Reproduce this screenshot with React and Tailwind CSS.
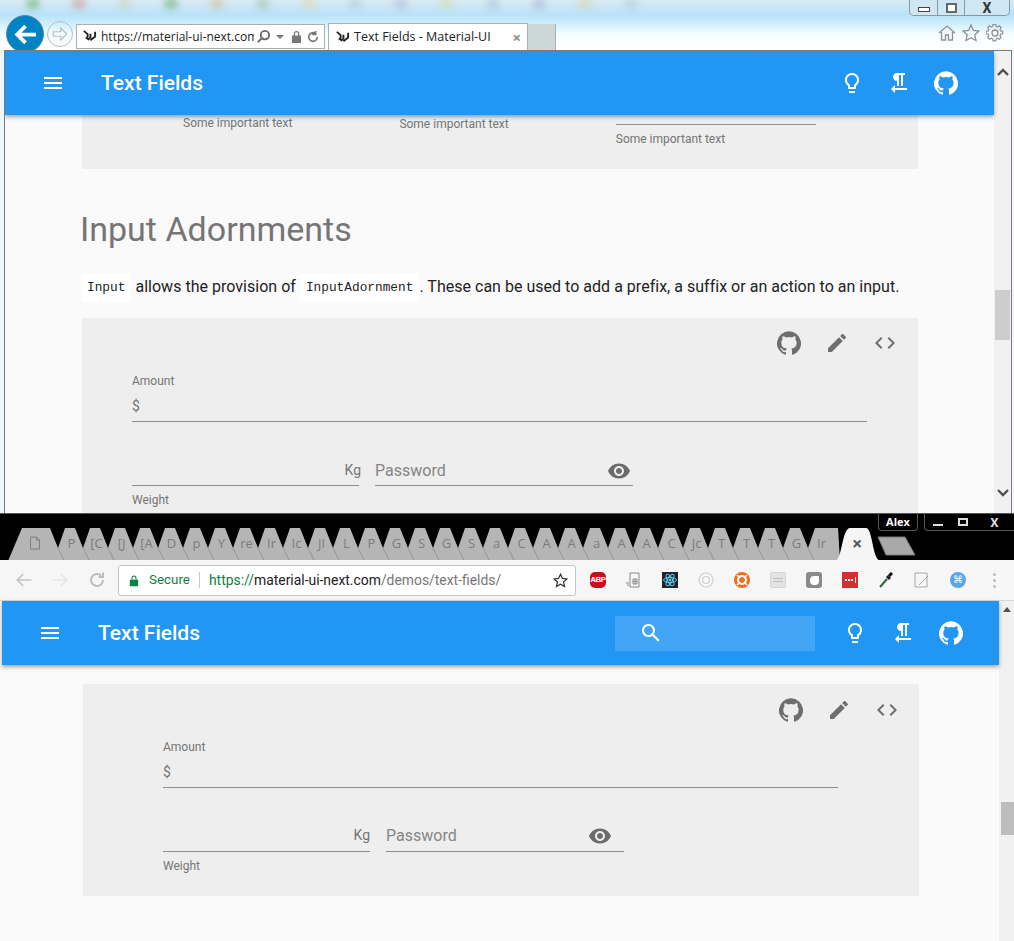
import React from 'react';

const paths = {
    menu: 'M3 18h18v-2H3v2zm0-5h18v-2H3v2zm0-7v2h18V6H3z',
    bulb: 'M9 21c0 .55.45 1 1 1h4c.55 0 1-.45 1-1v-1H9v1zm3-19C8.14 2 5 5.14 5 9c0 2.38 1.19 4.47 3 5.74V17c0 .55.45 1 1 1h6c.55 0 1-.45 1-1v-2.26c1.81-1.27 3-3.36 3-5.74 0-3.86-3.14-7-7-7zm2.85 11.1l-.85.6V16h-4v-2.3l-.85-.6C7.8 12.16 7 10.63 7 9c0-2.76 2.24-5 5-5s5 2.24 5 5c0 1.63-.8 3.16-2.15 4.1z',
    rtl: 'M10 10v5h2V4h2v11h2V4h2V2h-8C7.79 2 6 3.79 6 6s1.79 4 4 4zm-2 7v-3l-4 4 4 4v-3h12v-2H8z',
    github: 'M12 .3a12 12 0 0 0-3.8 23.4c.6.1.8-.3.8-.6v-2c-3.3.7-4-1.6-4-1.6-.6-1.4-1.4-1.8-1.4-1.8-1-.7.1-.7.1-.7 1.2 0 1.9 1.2 1.9 1.2 1 1.8 2.8 1.3 3.5 1 0-.8.4-1.3.7-1.6-2.7-.3-5.5-1.3-5.5-6 0-1.2.5-2.3 1.3-3.1-.2-.4-.6-1.6 0-3.2 0 0 1-.3 3.4 1.2a11.5 11.5 0 0 1 6 0c2.3-1.5 3.3-1.2 3.3-1.2.6 1.6.2 2.8 0 3.2.9.8 1.3 1.9 1.3 3.2 0 4.6-2.8 5.6-5.5 5.9.5.4.9 1 .9 2.2v3.3c0 .3.1.7.8.6A12 12 0 0 0 12 .3',
    pencil: 'M3 17.25V21h3.75L17.81 9.94l-3.75-3.75L3 17.25zM20.71 7.04c.39-.39.39-1.02 0-1.41l-2.34-2.34c-.39-.39-1.02-.39-1.41 0l-1.83 1.83 3.75 3.75 1.83-1.83z',
    code: 'M9.4 16.6L4.8 12l4.6-4.6L8 6l-6 6 6 6 1.4-1.4zm5.2 0l4.6-4.6-4.6-4.6L16 6l6 6-6 6-1.4-1.4z',
    eye: 'M12 4.5C7 4.5 2.73 7.61 1 12c1.73 4.39 6 7.5 11 7.5s9.27-3.11 11-7.5c-1.73-4.39-6-7.5-11-7.5zM12 17c-2.76 0-5-2.24-5-5s2.24-5 5-5 5 2.24 5 5-2.24 5-5 5zm0-8c-1.66 0-3 1.34-3 3s1.34 3 3 3 3-1.34 3-3-1.34-3-3-3z',
    search: 'M15.5 14h-.79l-.28-.27C15.41 12.59 16 11.11 16 9.5 16 5.91 13.09 3 9.5 3S3 5.91 3 9.5 5.91 16 9.5 16c1.61 0 3.09-.59 4.23-1.57l.27.28v.79l5 4.99L20.49 19l-4.99-5zm-6 0C7.01 14 5 11.99 5 9.5S7.01 5 9.5 5 14 7.01 14 9.5 11.99 14 9.5 14z',
};

const Icon = ({ name, className }) => (
    <svg viewBox="0 0 24 24" fill="currentColor" className={className}>
        <path d={paths[name]} />
    </svg>
);

const MuiLogo = () => (
    <svg viewBox="0 0 16 16" className="w-[15px] h-[15px] shrink-0" fill="none" stroke="#222" strokeWidth="2">
        <path d="M2 2l4 3.500V9M9 5v4l-2 2-3-2M14 3v5l-5 4" />
    </svg>
);

const AppBar = ({ left, title, titleClass, children, gap }) => (
    <header className="h-16 bg-[#2196f3] text-white flex items-center shadow-[0_2px_4px_rgba(0,0,0,0.35)] shrink-0 relative z-10">
        <Icon name="menu" className={`w-6 h-6 shrink-0 ${left}`} />
        <h1 className={`text-[21px] font-medium leading-none ${titleClass}`}>{title}</h1>
        <div className={`ml-auto flex items-center ${gap}`}>{children}</div>
    </header>
);

const DemoIcons = ({ className }) => (
    <div className={`flex items-center justify-end text-[#6e6e6e] ${className}`}>
        <Icon name="github" className="w-6 h-6" />
        <Icon name="pencil" className="w-6 h-6 ml-6" />
        <Icon name="code" className="w-6 h-6 ml-6" />
    </div>
);

// the amount / weight / password form, both windows show the same one
const AdornmentForm = ({ kgWidth, passwordWidth, kgClass, kgPad, rowPad, eyeClass }) => (
    <div>
        <p className="text-xs leading-none text-[#757575]">Amount</p>
        <div className="border-b border-[#8c8c8c] h-[35px] pt-[11px] text-[14px] leading-4 text-[#757575]">$</div>
        <div className="flex mt-[32px] gap-[16px]">
            <div className={kgWidth}>
                <div className={`border-b border-[#8c8c8c] h-[32px] text-[14px] leading-4 text-[#757575] text-right ${kgPad}`}>
                    <span className={kgClass}>Kg</span>
                </div>
                <p className="text-xs leading-none text-[#757575] mt-[8px]">Weight</p>
            </div>
            <div className={`${passwordWidth} border-b border-[#8c8c8c] h-[32px] flex items-center justify-between text-[16px] text-[#858585] ${rowPad}`}>
                <span>Password</span>
                <Icon name="eye" className={`w-6 h-6 text-[#6b6b6b] ${eyeClass}`} />
            </div>
        </div>
    </div>
);

const IeBar = () => (
    <div className="h-[50px] shrink-0 relative bg-[linear-gradient(180deg,#dcebf2_0px,#b9e2f8_14px,#c4e9fb_20px,#f4fdff_34px,#ffffff_50px)] overflow-hidden">
        {/* faint desktop icons behind the glass */}
        <div className="absolute left-[26px] -top-[2px] flex gap-[32px] blur-[3px]">
            {['#58a858', '#d88888', '#c8d0b8', '#58a858', '#d8b888', '#90c0a0', '#e0d8a8', '#b0c8d8', '#a8b8d8', '#d8d8a8', '#a8c0d8', '#a0b0d8', '#d8d0a0', '#b0c8d8'].map((c, i) => (
                <div key={i} className="w-[14px] h-[11px] rounded-full opacity-50" style={{ background: c }} />
            ))}
        </div>
        <div className="absolute left-[6px] top-[15px] w-[38px] h-[38px] rounded-full bg-[#0083c4] border border-[#5a8aa5] flex items-center justify-center">
            <svg viewBox="0 0 24 24" className="w-[25px] h-[25px]" fill="none" stroke="#fff" strokeWidth="3.6">
                <path d="M12 4l-8 8 8 8M4 12h18" />
            </svg>
        </div>
        <div className="absolute left-[47px] top-[21px] w-[26px] h-[26px] rounded-full border border-[#b5bcc0] flex items-center justify-center">
            <svg viewBox="0 0 24 24" className="w-[18px] h-[18px]" fill="none" stroke="#b8bec2" strokeWidth="1.6">
                <path d="M13 4l8 8-8 8v-5H3V9h10z" />
            </svg>
        </div>
        <div className="absolute left-[76px] top-[24px] w-[249px] h-[25px] bg-white border border-[#a8b0b0] flex items-center pl-[5px] text-[#222] font-['Open_Sans',sans-serif]">
            <MuiLogo />
            <span className="ml-[4px] w-[153px] overflow-hidden whitespace-nowrap text-[12px]">https://material-ui-next.com/</span>
            <svg viewBox="0 0 16 16" className="w-[15px] h-[15px] ml-[2px]" fill="none" stroke="#666" strokeWidth="2">
                <circle cx="9.5" cy="6.5" r="4.5" />
                <path d="M6 10l-4 4" />
            </svg>
            <div className="w-0 h-0 ml-[5px] border-x-[4px] border-x-transparent border-t-[4px] border-t-[#777]" />
            <svg viewBox="0 0 12 14" className="w-[11px] h-[13px] ml-[7px]" fill="#777">
                <path d="M1 6h10v8H1zM3 6V4a3 3 0 0 1 6 0v2H7.6V4a1.6 1.6 0 0 0-3.2 0v2z" />
            </svg>
            <svg viewBox="0 0 14 14" className="w-[12px] h-[12px] ml-[5px]" fill="none" stroke="#777" strokeWidth="2">
                <path d="M12 7a5 5 0 1 1-2-4M10 0v4H6" />
            </svg>
        </div>
        <div className="absolute left-[328px] top-[23px] w-[200px] h-[27px] bg-white border border-b-0 border-[#a8b0b0] flex items-center pl-[6px] text-[12.5px] text-[#222] font-['Open_Sans',sans-serif]">
            <MuiLogo />
            <span className="ml-[4px]">Text Fields - Material-UI</span>
            <span className="ml-auto mr-[6px] text-[#8a8a8a] text-[15px] font-bold leading-none">×</span>
        </div>
        <div className="absolute left-[528px] top-[24px] w-[28px] h-[26px] bg-[#ccd8d8] border-r border-[#a8b0b0]" />
        <div className="absolute left-[909px] top-0 w-[101px] h-[16px] border border-t-0 border-[#8a9aa5] rounded-b-[5px] flex bg-[#cfe7f2] text-[#333]">
            <div className="w-[28px] border-r border-[#8a9aa5] flex items-center justify-center">
                <div className="w-[12px] h-[5px] border border-[#444] bg-white mt-1" />
            </div>
            <div className="w-[27px] border-r border-[#8a9aa5] flex items-center justify-center">
                <div className="w-[11px] h-[10px] border-2 border-[#666] bg-white" />
            </div>
            <div className="flex-1 flex items-center justify-center text-[14px] leading-none font-bold">X</div>
        </div>
        <div className="absolute right-[10px] top-[24px] flex items-center gap-[6px] text-[#8f8f8f]">
            <svg viewBox="0 0 18 18" className="w-[18px] h-[18px]" fill="none" stroke="currentColor" strokeWidth="1.3">
                <path d="M1 9l8-7 8 7M3.5 8v8h4v-5h3v5h4V8" />
            </svg>
            <svg viewBox="0 0 18 18" className="w-[18px] h-[18px]" fill="none" stroke="currentColor" strokeWidth="1.3">
                <path d="M9 1l2.4 5.4 5.6.6-4.2 3.8 1.2 5.7L9 13.7l-5 2.8 1.2-5.7L1 7l5.6-.6z" />
            </svg>
            <svg viewBox="0 0 18 18" className="w-[18px] h-[18px]" fill="none" stroke="currentColor" strokeWidth="1.3">
                <circle cx="9" cy="9" r="3" />
                <path d="M7.500 1h3l.4 2.300 1.600.7 2-1.300 2 2-1.300 2 .7 1.600 2.300.4v3l-2.300.4-.7 1.600 1.300 2-2 2-2-1.300-1.600.7-.4 2.300h-3l-.4-2.300-1.600-.7-2 1.300-2-2 1.300-2-.7-1.600-2.300-.4v-3l2.300-.4.7-1.600-1.300-2 2-2 2 1.300 1.600-.7z" transform="translate(.3 -.6) scale(.9)" />
            </svg>
        </div>
    </div>
);

const IeScrollbar = () => (
    <div className="w-[17px] bg-[#f1f1f1] flex flex-col items-center justify-between shrink-0 relative">
        <svg viewBox="0 0 12 8" className="w-3 h-2 mt-[17px]" fill="none" stroke="#505050" strokeWidth="2.4">
            <path d="M1 7l5-5 5 5" />
        </svg>
        <div className="absolute left-[1px] top-[239px] w-[15px] h-[50px] bg-[#cdcdcd]" />
        <svg viewBox="0 0 12 8" className="w-3 h-2 mb-[16px]" fill="none" stroke="#505050" strokeWidth="2.4">
            <path d="M1 1l5 5 5-5" />
        </svg>
    </div>
);

const IeWindow = () => (
    <div className="h-[513px] shrink-0 flex flex-col bg-[#eef8fc]">
        <IeBar />
        <div className="flex-1 min-h-0 ml-[4px] mr-[2px] border-l border-r border-t border-[#7a7a7a] flex overflow-hidden">
            <div className="flex-1 min-w-0 flex flex-col bg-[#fafafa]">
                <AppBar left="ml-[36px]" title="Text Fields" titleClass="ml-[36px]" gap="gap-[23px] mr-[36px]">
                    <Icon name="bulb" className="w-6 h-6" />
                    <Icon name="rtl" className="w-6 h-6" />
                    <Icon name="github" className="w-6 h-6" />
                </AppBar>
                <div className="ml-[77px] mr-[76px] h-[54px] bg-[#eeeeee] flex text-xs text-[#757575] shrink-0">
                    <p className="ml-[101px] mt-[1px] leading-[14px]">Some important text</p>
                    <p className="ml-[107px] mt-[2px] leading-[14px]">Some important text</p>
                    <div className="ml-[107px] w-[200px]">
                        <div className="h-[10px] border-b border-[#8c8c8c]" />
                        <p className="mt-[7px] leading-[14px]">Some important text</p>
                    </div>
                </div>
                <div className="ml-[76px] mr-[76px] shrink-0">
                    <h2 className="mt-[40px] -ml-px text-[34px] leading-[40px] text-[#757575]">Input Adornments</h2>
                    <p className="mt-[23px] text-[16px] leading-[30px] text-[#222] whitespace-nowrap flex items-center tracking-[0.02px]">
                        <code className="bg-white px-[6px] h-[29px] leading-[29px] tracking-normal text-[12.8px] font-['Liberation_Mono',monospace] text-[#222]">Input</code>
                        <span className="ml-[4px]">allows the provision of</span>
                        <code className="bg-white px-[6px] ml-[4px] h-[29px] leading-[29px] tracking-normal text-[12.8px] font-['Liberation_Mono',monospace] text-[#222]">InputAdornment</code>
                        <span>. These can be used to add a prefix, a suffix or an action to an input.</span>
                    </p>
                </div>
                <div className="ml-[77px] mr-[76px] mt-[16px] bg-[#eeeeee] flex-1 min-h-0 overflow-hidden">
                    <DemoIcons className="pt-[13px] pr-[21px]" />
                    <div className="ml-[50px] mr-[51px] mt-[20px]">
                        <AdornmentForm kgWidth="w-[227px]" passwordWidth="w-[258px]" kgPad="pt-[8px]" kgClass="relative left-[2px]" rowPad="pt-[2px]" eyeClass="mr-[2px]" />
                    </div>
                </div>
            </div>
            <IeScrollbar />
        </div>
    </div>
);

const tabLabels = ['P', '[C', '[J', '[A', 'D', 'p', 'Y', 're', 'Ir', 'Ic', 'JI', 'L', 'P', 'G', 'S', 'G', 'S', 'a', 'C', 'A', 'A', 'a', 'A', 'A', 'C', 'Jc', 'T', 'T', 'T', 'G', 'Ir'];

const TabShapes = () => {
    const notches = [];
    for (let i = 0; i < 31; i++) {
        const x = 58 + i * 25;
        notches.push(
            <g key={i}>
                <path d={`M${x - 8} 14H${x + 7}L${x} 34z`} fill="#000" />
                <path d={`M${x} 34L${x + 6} 46`} stroke="#959595" strokeWidth="1" />
            </g>
        );
    }
    return (
        <svg viewBox="0 0 1014 47" className="absolute left-0 top-0 w-[1014px] h-[47px]">
            <path d="M8 47L22 14H838L840 47z" fill="#b5b5b5" />
            {notches}
            <path d="M835 47C842 47 842 14 850 14H866C873 14 872 47 881 47z" fill="#f5f5f5" />
            <path d="M878 23H905L915 41H886z" fill="#a9a9a9" stroke="#777" strokeWidth="1" />
        </svg>
    );
};

const ExtIcon = ({ children }) => <div className="w-4 h-4 flex items-center justify-center shrink-0">{children}</div>;

const Extensions = () => (
    <div className="flex items-center gap-[20px] ml-[14px]">
        <div className="w-4 h-4 rounded-[5px] bg-[#c8101c] text-white text-[8px] tracking-[-0.5px] font-bold leading-4 text-center font-['Liberation_Sans',sans-serif]">ABP</div>
        <ExtIcon>
            <svg viewBox="0 0 16 16" className="w-4 h-4" fill="none" stroke="#8a8a8a" strokeWidth="1">
                <path d="M4 1h9v14H4zM7 7h4v5H7zM9 7v5M7 9.500h4M0 11h3M1 13h2" />
            </svg>
        </ExtIcon>
        <ExtIcon>
            <svg viewBox="0 0 16 16" className="w-4 h-4">
                <rect width="16" height="16" fill="#20232a" />
                <g fill="none" stroke="#61dafb" strokeWidth=".9">
                    <ellipse cx="8" cy="8" rx="6.500" ry="2.500" />
                    <ellipse cx="8" cy="8" rx="6.500" ry="2.500" transform="rotate(60 8 8)" />
                    <ellipse cx="8" cy="8" rx="6.500" ry="2.500" transform="rotate(120 8 8)" />
                </g>
                <circle cx="8" cy="8" r="1.300" fill="#61dafb" />
            </svg>
        </ExtIcon>
        <ExtIcon>
            <svg viewBox="0 0 16 16" className="w-4 h-4" fill="none" stroke="#cfcfcf" strokeWidth="1.200">
                <circle cx="8" cy="8" r="7" />
                <circle cx="8" cy="8" r="3.500" />
            </svg>
        </ExtIcon>
        <ExtIcon>
            <svg viewBox="0 0 16 16" className="w-4 h-4">
                <circle cx="8" cy="8" r="8" fill="#f26d21" />
                <circle cx="8" cy="8" r="4" fill="none" stroke="#fff" strokeWidth="2" />
                <path d="M3 3l3 3M13 3l-3 3M3 13l3-3M13 13l-3-3" stroke="#fff" strokeWidth="1.500" />
            </svg>
        </ExtIcon>
        <div className="w-4 h-4 rounded-[2px] bg-[#e4e4e4] border border-[#d5d5d5] flex flex-col justify-center gap-[2px] px-[2px]">
            <div className="h-px bg-[#bdbdbd]" />
            <div className="h-px bg-[#bdbdbd]" />
        </div>
        <div className="w-4 h-4 rounded-[3px] bg-[#8a8a8a] flex items-center justify-center">
            <div className="w-[9px] h-[9px] rounded-[4px] rounded-tr-none bg-white" />
        </div>
        <div className="w-4 h-4 bg-[#d32f2f] flex items-center justify-center gap-[1px]">
            <div className="w-[2px] h-[2px] bg-white" />
            <div className="w-[2px] h-[2px] bg-white" />
            <div className="w-[2px] h-[2px] bg-white" />
            <div className="w-px h-[6px] bg-white ml-[1px]" />
        </div>
        <ExtIcon>
            <svg viewBox="0 0 16 16" className="w-4 h-4" fill="none">
                <path d="M2 15l7-8" stroke="#2e6b3e" strokeWidth="2" />
                <path d="M9 4l3 3" stroke="#222" strokeWidth="3" />
                <path d="M11 4l3-3" stroke="#111" strokeWidth="3" />
            </svg>
        </ExtIcon>
        <ExtIcon>
            <svg viewBox="0 0 16 16" className="w-4 h-4" fill="none" stroke="#a8a8a8" strokeWidth="1">
                <path d="M1 1h12v14H1zM5 13l9-9" />
            </svg>
        </ExtIcon>
        <div className="w-4 h-4 rounded-full bg-[#5aa5e8] text-white text-[10px] leading-4 text-center font-['DejaVu_Sans',sans-serif]">⌘</div>
        <div className="ml-[7px] flex flex-col gap-[3px]">
            <div className="w-[3px] h-[3px] rounded-full bg-[#bdbdbd]" />
            <div className="w-[3px] h-[3px] rounded-full bg-[#bdbdbd]" />
            <div className="w-[3px] h-[3px] rounded-full bg-[#bdbdbd]" />
        </div>
    </div>
);

const ChromeBar = () => (
    <div className="shrink-0">
        <div className="h-[47px] bg-black relative overflow-hidden border-t border-[#555]">
            <TabShapes />
            <div className="relative flex items-center h-full pt-[12px] pl-[29px] text-[13px] text-[#7c7c7c] font-['Open_Sans',sans-serif]">
                <svg viewBox="0 0 12 14" className="w-[12px] h-[14px] shrink-0" fill="#b5b5b5" stroke="#7f7f7f" strokeWidth="1">
                    <path d="M1.500 1h6l3 3v9h-9zM7.500 1v3h3" />
                </svg>
                <div className="flex ml-[18px]">
                    {tabLabels.map((label, i) => (
                        <span key={i} className="w-[25px] text-center overflow-hidden leading-4">{label}</span>
                    ))}
                </div>
                <span className="ml-[18px] text-[#555] text-[18px] font-bold leading-4">×</span>
            </div>
            <div className="absolute right-0 top-0 flex items-start text-white">
                <div className="w-[40px] h-[17px] border border-t-0 border-[#555] rounded-b-[4px] text-[11px] font-bold text-center leading-[15px] font-['Open_Sans',sans-serif] mr-[6px]">Alex</div>
                <div className="w-[90px] h-[17px] border border-t-0 border-r-0 border-[#555] rounded-bl-[4px] flex items-center text-[#ddd]">
                    <div className="w-[25px] flex justify-center"><div className="w-[10px] h-[2px] bg-[#ddd] mt-[5px]" /></div>
                    <div className="w-[25px] flex justify-center"><div className="w-[10px] h-[8px] border-2 border-[#ddd]" /></div>
                    <div className="flex-1 text-center text-[13px] font-bold leading-none">X</div>
                </div>
            </div>
        </div>
        <div className="h-[41px] bg-[#f6f6f6] flex items-center border-b border-[#d8d8d8]">
            <svg viewBox="0 0 24 24" className="w-[18px] h-[18px] ml-[15px] text-[#c4c4c4]" fill="none" stroke="currentColor" strokeWidth="2.200">
                <path d="M11 4l-8 8 8 8M3 12h19" />
            </svg>
            <svg viewBox="0 0 24 24" className="w-[18px] h-[18px] ml-[18px] text-[#e6e6e6]" fill="none" stroke="currentColor" strokeWidth="2.200">
                <path d="M13 4l8 8-8 8M21 12H2" />
            </svg>
            <svg viewBox="0 0 24 24" className="w-[18px] h-[18px] ml-[19px] text-[#bcbcbc]" fill="none" stroke="currentColor" strokeWidth="2.600">
                <path d="M20 12a8 8 0 1 1-2.500-5.800M20 2v6h-6" />
            </svg>
            <div className="ml-[12px] w-[458px] h-[31px] bg-white border border-[#c4c4c4] rounded-[3px] flex items-center text-[13.9px] whitespace-nowrap">
                <svg viewBox="0 0 12 14" className="w-[10px] h-[13px] ml-[10px]" fill="#0b8043">
                    <path d="M1 6h10v8H1zM3 6V4a3 3 0 0 1 6 0v2H7.800V4a1.800 1.800 0 0 0-3.600 0v2z" />
                </svg>
                <span className="ml-[10px] text-[#0b8043] text-[13.4px]">Secure</span>
                <div className="w-px h-[16px] bg-[#c8c8c8] mx-[9px]" />
                <span className="text-[#0b8043]">https://</span>
                <span className="text-[#222]">material-ui-next.com</span>
                <span className="text-[#777]">/demos/text-fields/</span>
                <svg viewBox="0 0 18 18" className="w-[15px] h-[15px] ml-auto mr-[7px]" fill="none" stroke="#333" strokeWidth="1.500">
                    <path d="M9 1.500l2.300 5 5.400.6-4 3.700 1.100 5.400L9 13.400l-4.800 2.800 1.100-5.400-4-3.700 5.400-.6z" />
                </svg>
            </div>
            <Extensions />
        </div>
    </div>
);

const ChromeScrollbar = () => (
    <div className="w-[15px] bg-[#f1f1f1] shrink-0 relative flex justify-end">
        <svg viewBox="0 0 8 5" className="w-[8px] h-[5px] mt-[6px] mr-[3px]" fill="#505050">
            <path d="M4 0l4 5H0z" />
        </svg>
        <div className="absolute left-[2px] top-[201px] w-[13px] h-[33px] bg-[#bdbdbd]" />
    </div>
);

const ChromeWindow = () => (
    <div className="flex-1 min-h-0 flex flex-col bg-[#fafafa] overflow-hidden">
        <ChromeBar />
        <div className="flex flex-1 min-h-0">
            <div className="flex-1 min-w-0 pl-[2px]">
                <AppBar left="ml-[36px]" title="Text Fields" titleClass="ml-[36px]" gap="mr-[36px]">
                    <div className="w-[200px] h-[35px] bg-[#42a5f5] flex items-center pl-[24px] mr-[28px]">
                        <Icon name="search" className="w-6 h-6" />
                    </div>
                    <Icon name="bulb" className="w-6 h-6 mr-[24px]" />
                    <Icon name="rtl" className="w-6 h-6 mr-[24px]" />
                    <Icon name="github" className="w-6 h-6" />
                </AppBar>
                <div className="ml-[81px] mr-[80px] mt-[19px] h-[212px] bg-[#eeeeee]">
                    <DemoIcons className="pt-[14px] pr-[20px]" />
                    <div className="ml-[80px] mr-[81px] mt-[19px]">
                        <AdornmentForm kgWidth="w-[207px]" passwordWidth="w-[238px]" kgPad="pt-[7px]" kgClass="" rowPad="" eyeClass="mr-[12px]" />
                    </div>
                </div>
            </div>
            <ChromeScrollbar />
        </div>
    </div>
);

const App = () => (
    <div className="w-[1014px] h-[941px] overflow-hidden flex flex-col font-['Roboto',sans-serif]">
        <IeWindow />
        <ChromeWindow />
    </div>
);

export default App;
